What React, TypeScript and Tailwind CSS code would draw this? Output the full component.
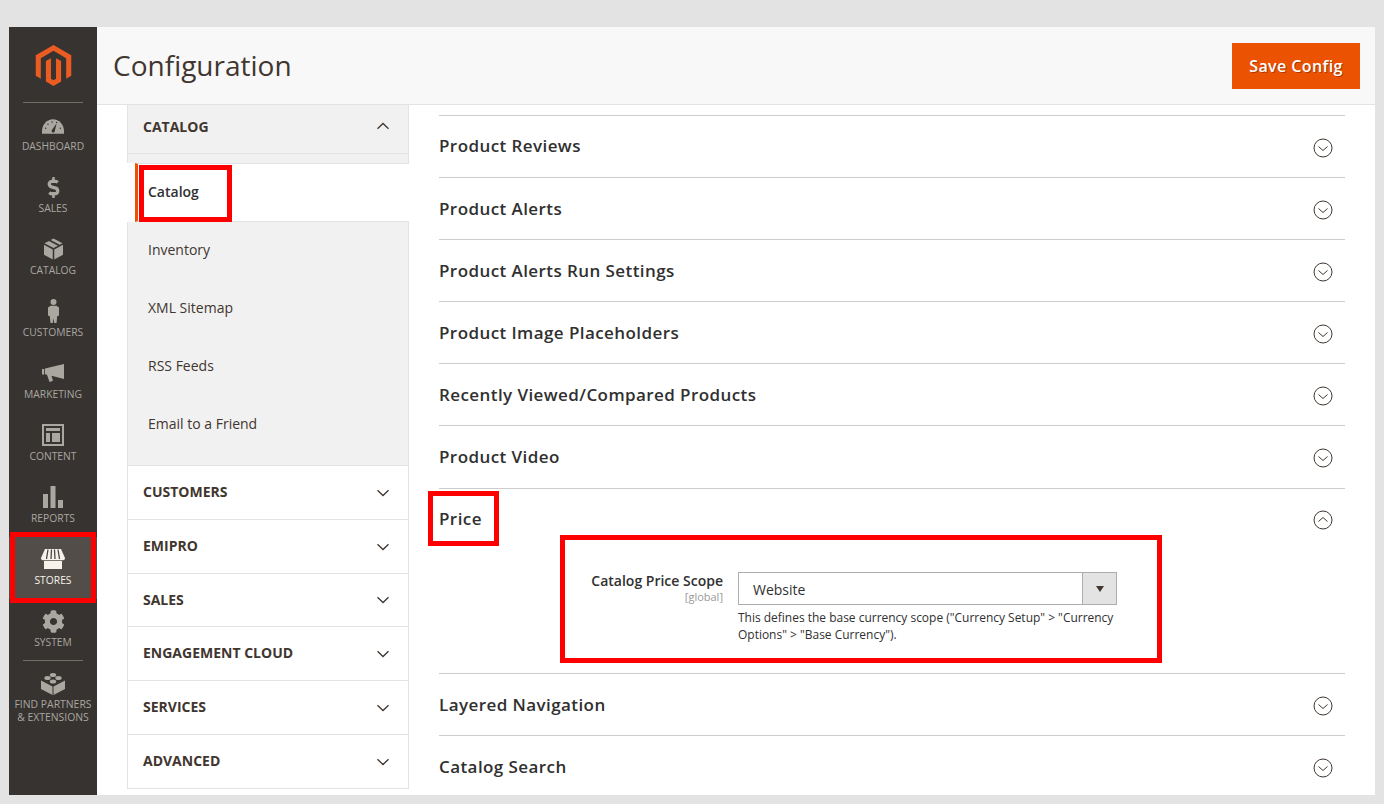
import { FaCog, FaDollarSign } from 'react-icons/fa';

const Dashboard = () => (
  <svg width="22" height="17" viewBox="0 0 24 18" fill="#aaa6a0" className="mt-[3px]">
    <path d="M0 17V14C0 6.500 5.400 1 12 1s12 5.500 12 13v3z" />
    <path d="M11 12.500l5-7-2 8a1.800 1.800 0 1 1-3-1z" fill="#373330" />
    <g fill="#373330">
      <circle cx="4" cy="11" r=".8" /><circle cx="6.500" cy="6.500" r=".8" /><circle cx="11" cy="4" r=".8" /><circle cx="16" cy="4.500" r=".8" /><circle cx="20" cy="11" r=".8" />
    </g>
  </svg>
);

const Box = () => (
  <svg width="19" height="22" viewBox="0 0 20 22" fill="#aaa6a0">
    <path d="M10 0l9.500 5-3 1.600-9.500-5zM5.200 2.500l9.500 5L10 10 .5 5z" />
    <path d="M0 6.500l9.200 4.900V22L0 17zM20 6.500V17l-9.200 5V11.400z" />
  </svg>
);

const Person = () => (
  <svg width="11" height="24" viewBox="0 0 11 24" fill="#aaa6a0">
    <circle cx="5.500" cy="3" r="3" />
    <path d="M2.500 6.800h6L11 8.500v8l-1.800.8-.7 6.700H6.200l-.7-5-.7 5H2.500l-.7-6.700L0 16.500v-8z" />
  </svg>
);

const Megaphone = () => (
  <svg width="22" height="18" viewBox="0 0 22 18" fill="#aaa6a0">
    <path d="M0 5h2.200v5.500H0z" />
    <path d="M3 4.500L22 0v15L9.500 11.800 11 16.800 7.500 18 5 10.800 3 10.300z" />
  </svg>
);

const Content = () => (
  <svg width="22" height="22" viewBox="0 0 22 22" fill="#aaa6a0">
    <path fillRule="evenodd" d="M0 0h22v22H0zM2 2v18h18V2z" />
    <path d="M4 4h14v3H4zM4 9h4v9H4zM10 9h8v9h-8z" />
  </svg>
);

const Bars = () => (
  <svg width="20" height="22" viewBox="0 0 20 22" fill="#aaa6a0">
    <path d="M0 8h5v14H0zM7.500 0h5v22h-5zM15 14h5v8h-5z" />
  </svg>
);

const Store = () => (
  <svg width="24" height="20" viewBox="0 0 24 20" fill="#f7f3eb">
    <path d="M4 0h16l4 9c0 1.500-1 2.200-2 2.200H2C1 11.200 0 10.500 0 9z" />
    <path d="M7 .5L5.500 10M10.500 .5L10 10M13.500 .5L14 10M17 .5L18.500 10" stroke="#4a4542" strokeWidth="1.300" />
    <path d="M3 12h18v8H3z" />
  </svg>
);

const Lego = () => (
  <svg width="24" height="23" viewBox="0 0 24 23" fill="#aaa6a0">
    <path d="M0 8.500l11.500 6V23L0 17zM24 8.500V17l-11.500 6v-8.500z" />
    <ellipse cx="12" cy="3" rx="3.200" ry="2" />
    <ellipse cx="6.500" cy="6" rx="3.200" ry="2" />
    <ellipse cx="17.500" cy="6" rx="3.200" ry="2" />
    <ellipse cx="12" cy="9.500" rx="3.200" ry="2" />
  </svg>
);

const menu = [
  { label: 'DASHBOARD', icon: <Dashboard /> },
  { label: 'SALES', icon: <FaDollarSign className="text-[21px] text-[#aaa6a0]" /> },
  { label: 'CATALOG', icon: <Box /> },
  { label: 'CUSTOMERS', icon: <Person /> },
  { label: 'MARKETING', icon: <Megaphone /> },
  { label: 'CONTENT', icon: <Content /> },
  { label: 'REPORTS', icon: <Bars /> },
  { label: 'STORES', icon: <Store />, active: true },
  { label: 'SYSTEM', icon: <FaCog className="text-[23px] text-[#aaa6a0]" /> },
];

const subItems = ['Inventory', 'XML Sitemap', 'RSS Feeds', 'Email to a Friend'];
const navSections = ['CUSTOMERS', 'EMIPRO', 'SALES', 'ENGAGEMENT CLOUD', 'SERVICES', 'ADVANCED'];
const topRows = ['Product Reviews', 'Product Alerts', 'Product Alerts Run Settings', 'Product Image Placeholders', 'Recently Viewed/Compared Products', 'Product Video'];
const bottomRows = ['Layered Navigation', 'Catalog Search'];

const Chevron = ({ up }: { up?: boolean }) => (
  <svg width="14" height="8" viewBox="0 0 14 8" fill="none" stroke="#41362f" strokeWidth="1.300" className={up ? 'rotate-180' : ''}>
    <path d="M1.500 1.200L7 6.500l5.500-5.300" />
  </svg>
);

const CircleChevron = ({ up }: { up?: boolean }) => (
  <svg width="20" height="20" viewBox="0 0 20 20" fill="none" stroke="#41362f" strokeWidth="1" className={up ? 'rotate-180' : 'mt-[2px]'}>
    <circle cx="10" cy="10" r="9" />
    <path d="M5.500 8.500L10 12.500l4.500-4" />
  </svg>
);

const Row = ({ title, first }: { title: string; first?: boolean }) => (
  <div className="h-[62px] border-t border-[#cccccc] flex items-center justify-between pr-[12px]">
    <span className={`text-[17px] font-semibold tracking-[0.42px] text-[#303030] ${first ? 'pb-[2px]' : ''}`}>{title}</span>
    <CircleChevron />
  </div>
);

const RedBox = ({ className }: { className: string }) => (
  <div className={`absolute border-[5px] border-[#ff0000] pointer-events-none ${className}`} />
);

export default function App() {
  return (
    <div className="relative w-[1384px] h-[804px] overflow-hidden bg-[#e3e3e3] pt-[27px] px-[9px] pb-[9px] font-['Open_Sans',sans-serif]">
      <div className="flex h-full bg-white overflow-hidden">
        {/* Sidebar */}
        <aside className="w-[88px] shrink-0 bg-[#373330] flex flex-col items-center">
          <div className="h-[75px] w-full flex items-center justify-center">
            <svg width="41" height="41" viewBox="0 0 24 24" fill="#eb5c22" className="mt-[2px]">
              <path d="M12 24l-4.455-2.572v-12l2.970-1.715v12.001l1.485.902 1.485-.902V7.713l2.971 1.715v12L12 24zM22.391 6v12l-2.969 1.714V7.713L12 3.430 4.574 7.713v12.001L1.609 18V6L12 0l10.391 6z" />
            </svg>
          </div>
          <div className="w-[60px] h-px bg-[#736d67]" />
          {menu.map((item) => (
            <div
              key={item.label}
              className={`w-full h-[62px] flex flex-col items-center pt-[10px] ${item.active ? 'bg-[#524d49] text-[#f7f3eb]' : 'text-[#aaa6a0]'}`}
            >
              <div className="h-[24px] flex items-center justify-center">{item.icon}</div>
              <span className="text-[10.300px] leading-[14px] mt-[2px]">{item.label}</span>
            </div>
          ))}
          <div className="w-[60px] h-px bg-[#736d67] -mt-px" />
          <div className="w-full flex flex-col items-center pt-[11px] text-[#aaa6a0]">
            <Lego />
            <span className="text-[10.400px] leading-[13px] mt-[3px] text-center whitespace-nowrap">FIND PARTNERS<br />&amp; EXTENSIONS</span>
          </div>
        </aside>

        <div className="flex-1 min-w-0 flex flex-col">
          {/* Page header */}
          <header className="h-[78px] shrink-0 bg-[#f8f8f8] border-b border-[#e3e3e3] flex items-center justify-between pl-[16px] pr-[15px]">
            <h1 className="text-[28px] font-normal text-[#41362f] pb-[2px]">Configuration</h1>
            <button className="w-[128px] h-[46px] bg-[#eb5202] text-white text-[16px] font-semibold tracking-[0.4px] [text-shadow:1px_1px_0_rgba(0,0,0,0.3)]">Save Config</button>
          </header>

          <div className="flex-1 min-h-0 flex overflow-hidden">
            {/* Config nav */}
            <nav className="ml-[30px] w-[282px] shrink-0">
              <div className="h-[49px] bg-[#f1f1f1] border-x border-b border-[#e3e3e3] flex items-center justify-between pl-[15px] pr-[18px] pb-[6px]">
                <span className="text-[14px] font-bold text-[#41362f]">CATALOG</span>
                <Chevron up />
              </div>
              <div className="h-[9px] bg-[#f1f1f1] border-x border-[#e3e3e3]" />
              <div className="h-[59px] bg-white border-t border-b border-[#e3e3e3] flex items-center ml-[8px] border-l-[3px] border-l-[#eb5202] pl-[10px] pb-[3px]">
                <span className="text-[14px] font-semibold text-[#303030]">Catalog</span>
              </div>
              <div className="h-[243px] bg-[#f1f1f1] border-x border-[#e3e3e3]">
                {subItems.map((s) => (
                  <div key={s} className="h-[58px] flex items-center pl-[20px] pb-[4px] text-[14px] text-[#41362f]">{s}</div>
                ))}
              </div>
              <div className="border-x border-b border-[#e3e3e3]">
                {navSections.map((s) => (
                  <div key={s} className={`${s === 'SALES' ? 'h-[53px]' : 'h-[54px]'} border-t border-[#e3e3e3] flex items-center justify-between pl-[15px] pr-[18px]`}>
                    <span className="text-[14px] font-bold text-[#41362f] pb-[2px]">{s}</span>
                    <Chevron />
                  </div>
                ))}
              </div>
            </nav>

            {/* Config sections */}
            <main className="ml-[30px] w-[906px] shrink-0 pt-[10px]">
              {topRows.map((r, i) => <Row key={r} title={r} first={i === 0} />)}
              <div className="h-px" />
              <div className="border-t border-[#cccccc] h-[185px]">
                <div className="h-[61px] flex items-center justify-between pr-[12px]">
                  <span className="text-[17px] font-semibold tracking-[0.42px] text-[#303030] pb-[2px]">Price</span>
                  <CircleChevron up />
                </div>
                <div className="flex pt-[22px]">
                  <div className="w-[284px] text-right">
                    <div className="text-[14px] font-semibold leading-[18px] text-[#303030]">Catalog Price Scope</div>
                    <div className="text-[11px] leading-[14px] text-[#999999]">[global]</div>
                  </div>
                  <div className="ml-[15px] w-[379px]">
                    <div className="h-[33px] flex border border-[#adadad] bg-white">
                      <span className="flex-1 pl-[14px] text-[14px] leading-[34px] text-[#303030]">Website</span>
                      <span className="w-[34px] bg-[#e3e3e3] border-l border-[#adadad] flex items-center justify-center">
                        <span className="w-0 h-0 border-x-[4px] border-x-transparent border-t-[6px] border-t-[#41362f]" />
                      </span>
                    </div>
                    <p className="mt-[4px] text-[11.980px] leading-[17px] text-[#303030]">This defines the base currency scope ("Currency Setup" &gt; "Currency Options" &gt; "Base Currency").</p>
                  </div>
                </div>
              </div>
              {bottomRows.map((r) => <Row key={r} title={r} />)}
            </main>
          </div>
        </div>
      </div>

      {/* Annotations drawn over the screenshot */}
      <RedBox className="left-[10px] top-[532px] w-[86px] h-[71px]" />
      <RedBox className="left-[139px] top-[165px] w-[93px] h-[57px]" />
      <RedBox className="left-[428px] top-[491px] w-[71px] h-[55px]" />
      <RedBox className="left-[560px] top-[535px] w-[602px] h-[128px]" />
    </div>
  );
}
